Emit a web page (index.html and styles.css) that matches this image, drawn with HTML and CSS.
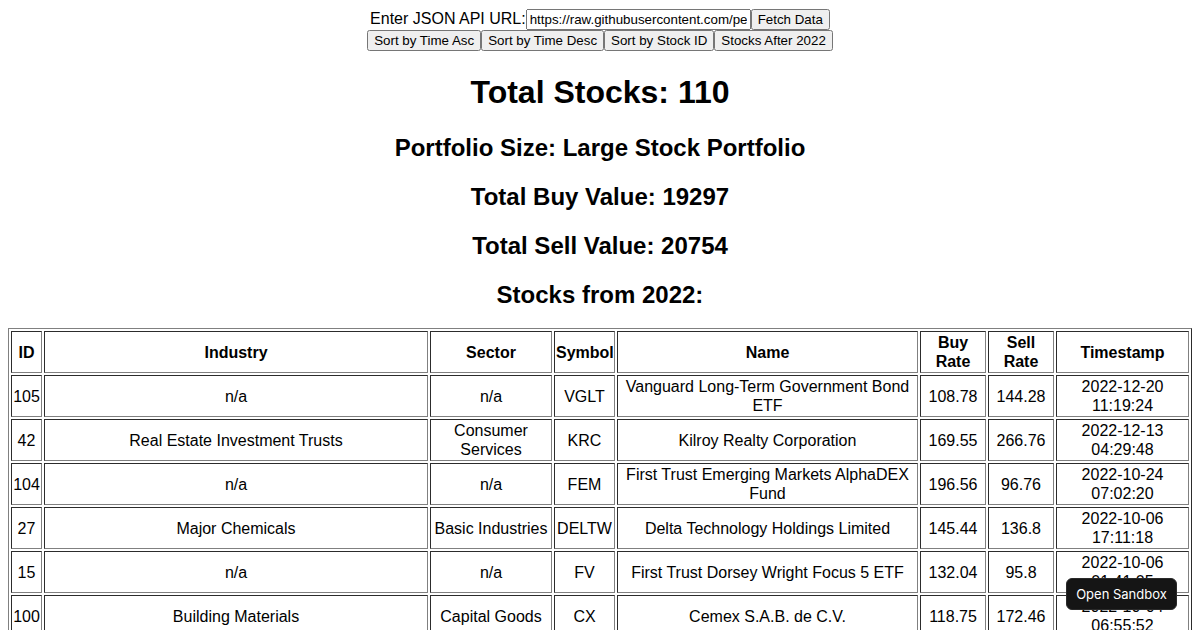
FILE: index.html
```html
<!DOCTYPE html>
<html lang="en">
<head>
<meta charset="utf-8">
<title>Stock Portfolio</title>
<link rel="stylesheet" href="styles.css">
</head>
<body>
<div class="app">
  <div class="controls">
    <div class="url-row"><label class="url-label" for="api">Enter JSON API URL:</label><input id="api" class="url-input" type="text" value="https://raw.githubusercontent.com/petermdavis/stocks/main/stocks.json"><button class="btn">Fetch Data</button></div>
    <div class="sort-row"><button class="btn">Sort by Time Asc</button><button class="btn">Sort by Time Desc</button><button class="btn">Sort by Stock ID</button><button class="btn">Stocks After 2022</button></div>
  </div>
  <h1 class="title">Total Stocks: 110</h1>
  <h2 class="stat">Portfolio Size: Large Stock Portfolio</h2>
  <h2 class="stat">Total Buy Value: 19297</h2>
  <h2 class="stat">Total Sell Value: 20754</h2>
  <h2 class="stat stat-last">Stocks from 2022:</h2>
  <table class="stocks">
    <thead>
      <tr>
        <th class="c-id">ID</th>
        <th class="c-ind">Industry</th>
        <th class="c-sec">Sector</th>
        <th class="c-sym">Symbol</th>
        <th class="c-name">Name</th>
        <th class="c-buy">Buy Rate</th>
        <th class="c-sell">Sell Rate</th>
        <th class="c-time">Timestamp</th>
      </tr>
    </thead>
    <tbody>
      <tr><td>105</td><td>n/a</td><td>n/a</td><td>VGLT</td><td>Vanguard Long-Term Government Bond ETF</td><td>108.78</td><td>144.28</td><td>2022-12-20 11:19:24</td></tr>
      <tr><td>42</td><td>Real Estate Investment Trusts</td><td>Consumer Services</td><td>KRC</td><td>Kilroy Realty Corporation</td><td>169.55</td><td>266.76</td><td>2022-12-13 04:29:48</td></tr>
      <tr><td>104</td><td>n/a</td><td>n/a</td><td>FEM</td><td>First Trust Emerging Markets AlphaDEX Fund</td><td>196.56</td><td>96.76</td><td>2022-10-24 07:02:20</td></tr>
      <tr><td>27</td><td>Major Chemicals</td><td>Basic Industries</td><td>DELTW</td><td>Delta Technology Holdings Limited</td><td>145.44</td><td>136.8</td><td>2022-10-06 17:11:18</td></tr>
      <tr><td>15</td><td>n/a</td><td>n/a</td><td>FV</td><td>First Trust Dorsey Wright Focus 5 ETF</td><td>132.04</td><td>95.8</td><td>2022-10-06 01:41:05</td></tr>
      <tr><td>100</td><td>Building Materials</td><td>Capital Goods</td><td>CX</td><td>Cemex S.A.B. de C.V.</td><td>118.75</td><td>172.46</td><td>2022-10-04 06:55:52</td></tr>
      <tr><td>63</td><td>Major Banks</td><td>Finance</td><td>BAC</td><td>Bank of America Corporation</td><td>121.3</td><td>150.12</td><td>2022-09-18 14:22:07</td></tr>
      <tr><td>8</td><td>n/a</td><td>n/a</td><td>SPY</td><td>SPDR S&amp;P 500 ETF Trust</td><td>184.9</td><td>201.33</td><td>2022-08-02 09:40:31</td></tr>
    </tbody>
  </table>
</div>
<button class="sandbox">Open Sandbox</button>
</body>
</html>
```

FILE: styles.css
```css
html, body {
  background: #ffffff;
}

body {
  margin: 8px;
  font-family: "Liberation Sans", Arial, sans-serif;
  font-size: 16px;
  line-height: 1.2;
  color: #000000;
}

.app {
  text-align: center;
}

.controls {
  text-align: center;
  padding-bottom: 1px;
}

.url-row {
  line-height: 1.2;
  padding-top: 1px;
}

.sort-row {
  line-height: 1.2;
}

.url-input {
  width: 217px;
  font-family: "Liberation Sans", Arial, sans-serif;
  font-size: 13.333px;
  margin: 0;
}

.btn {
  font-family: "Liberation Sans", Arial, sans-serif;
  font-size: 13.333px;
  margin: 0;
  padding: 1px 5px;
}

.title {
  font-size: 32px;
  font-weight: bold;
  line-height: 38.4px;
  margin: 21.44px 0;
}

.stat {
  font-size: 24px;
  font-weight: bold;
  line-height: 29px;
  margin: 20px 0;
}

.stat-last {
  margin-bottom: 19px;
}

.stocks {
  width: 100%;
  table-layout: fixed;
  border-collapse: separate;
  border-spacing: 2px;
  border: 1px outset #808080;
}

.stocks th,
.stocks td {
  border: 1px inset #808080;
  padding: 1px;
  text-align: center;
  vertical-align: middle;
  font-size: 16px;
  line-height: 19px;
}

.stocks th {
  font-weight: bold;
}

.c-id { width: 27px; }
.c-ind { width: 380px; }
.c-sec { width: 118px; }
.c-sym { width: 57px; }
.c-name { width: 297px; }
.c-buy { width: 62px; }
.c-sell { width: 62px; }
.c-time { width: 129px; }

.sandbox {
  position: fixed;
  right: 23px;
  bottom: 20px;
  width: 111px;
  height: 32px;
  padding: 0;
  border: 1px solid #2a2a2a;
  border-radius: 6px;
  background: #151515;
  color: #ffffff;
  font-family: Inter, "Liberation Sans", sans-serif;
  font-size: 13px;
  cursor: pointer;
}
```
